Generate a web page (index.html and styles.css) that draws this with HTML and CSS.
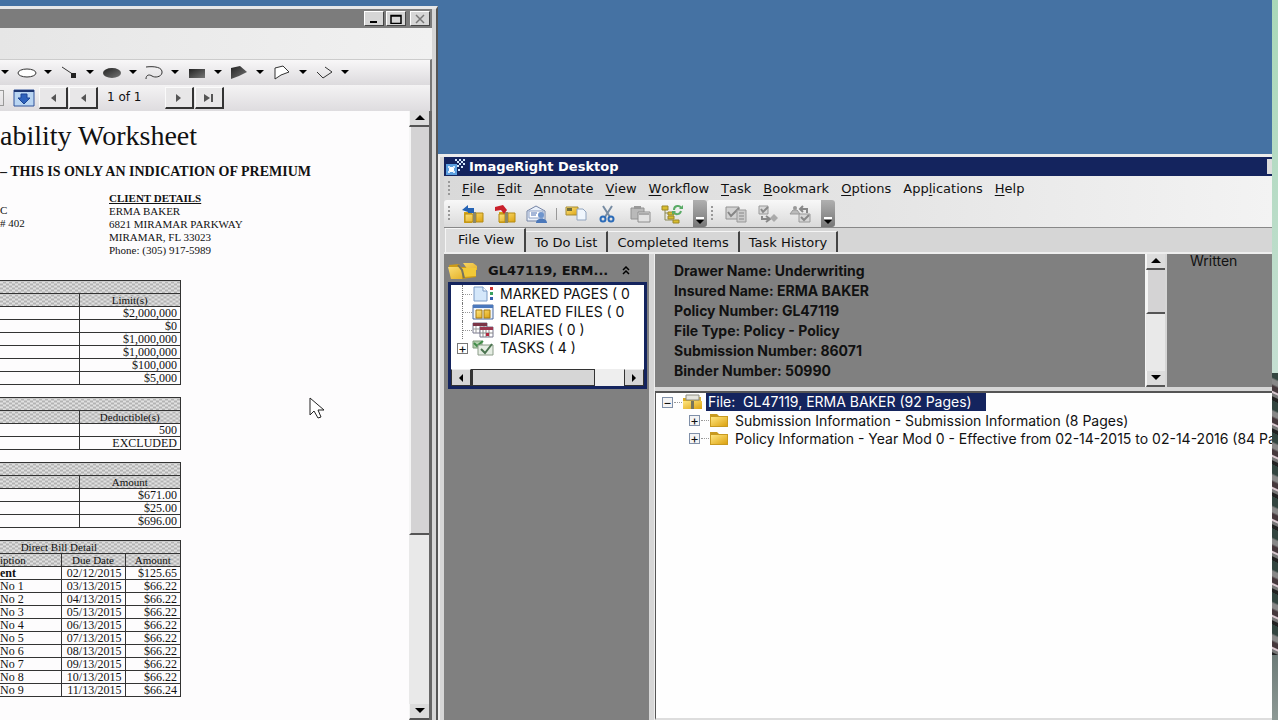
FILE: index.html
```html
<!DOCTYPE html>
<html lang="en">
<head>
  <meta charset="UTF-8">
  <title>ImageRight Desktop</title>
  <link rel="stylesheet" href="styles.css">
</head>
<body>

  <!-- shared icons -->
  <svg class="defs" width="0" height="0" aria-hidden="true">
    <defs>
      <linearGradient id="dark" x1="0" y1="0" x2="1" y2="1"><stop offset="0" stop-color="#222"/><stop offset="1" stop-color="#777"/></linearGradient>
      <linearGradient id="gold" x1="0" y1="0" x2="1" y2="1"><stop offset="0" stop-color="#ffe680"/><stop offset="1" stop-color="#dca210"/></linearGradient>
    </defs>
    <symbol id="folder" viewBox="0 0 20 16">
      <path d="M1 2h7l2 2h9v11H1z" fill="#c89a20"/>
      <path d="M2 5h16v9H2z" fill="url(#gold)"/>
    </symbol>
    <symbol id="down" viewBox="0 0 8 5"><path d="M0 0h8L4 4z" fill="#000"/></symbol>
    <symbol id="open-file" viewBox="0 0 22 18">
      <path d="M1 5h6l2 2h3v9H1z" fill="#d9a91c"/>
      <path d="M11 4h8v12h-8z" fill="#d6b33c"/>
      <path d="M4 2h13v5H4z" fill="#e4e4dc" stroke="#8b8b80"/>
      <path d="M1 8h8v8H1zM12 8h8v8h-8z" fill="url(#gold)"/>
      <path d="M9 8h3v8H9z" fill="#77755c"/>
    </symbol>
  </svg>

  <div class="window viewer">
    <div class="viewer-title">
      <button class="win-btn" aria-label="Minimize"><svg width="12" height="10"><path d="M2 8h7" stroke="#000" stroke-width="2"/></svg></button>
      <button class="win-btn" aria-label="Maximize"><svg width="12" height="10"><path d="M1 1.500h10v8H1zM1 2h10" fill="none" stroke="#000" stroke-width="1.500"/></svg></button>
      <button class="win-btn close" aria-label="Close"><svg width="12" height="10"><path d="M2 1l8 8M10 1l-8 8" stroke="#777" stroke-width="1.500"/></svg></button>
    </div>
    <div class="viewer-menu"></div>
    <div class="draw-bar">
      <button class="tool first" aria-label="More shapes"><svg width="8" height="5"><use href="#down"/></svg></button>
      <div class="tools">
        <button class="tool" aria-label="Ellipse"><svg width="20" height="16"><ellipse cx="10" cy="8" rx="9" ry="4" fill="#fff" stroke="#333"/></svg><svg width="8" height="5"><use href="#down"/></svg></button>
        <button class="tool" aria-label="Line"><svg width="20" height="16"><path d="M3 2l12 8" stroke="#333"/><path d="M12 8h5v5h-5z" fill="#222"/></svg><svg width="8" height="5"><use href="#down"/></svg></button>
        <button class="tool" aria-label="Filled ellipse"><svg width="20" height="16"><ellipse cx="10" cy="8" rx="9" ry="5" fill="url(#dark)"/></svg><svg width="8" height="5"><use href="#down"/></svg></button>
        <button class="tool" aria-label="Curve"><svg width="20" height="16"><path d="M2 2c8-1 17 0 16 6-1 4-7 5-10 3-3-2-6-1-6 3" fill="none" stroke="#333"/></svg><svg width="8" height="5"><use href="#down"/></svg></button>
        <button class="tool" aria-label="Filled box"><svg width="20" height="16"><path d="M2 4h16v9H2z" fill="url(#dark)"/></svg><svg width="8" height="5"><use href="#down"/></svg></button>
        <button class="tool" aria-label="Filled polygon"><svg width="20" height="16"><path d="M2 3l9-2 7 6-8 4-8 3z" fill="url(#dark)"/></svg><svg width="8" height="5"><use href="#down"/></svg></button>
        <button class="tool" aria-label="Polygon"><svg width="20" height="16"><path d="M3 3l8-2 6 6-8 3-6 4z" fill="#fff" stroke="#333"/></svg><svg width="8" height="5"><use href="#down"/></svg></button>
        <button class="tool" aria-label="Polyline"><svg width="20" height="16"><path d="M11 2l7 5-9 6-6-6" fill="none" stroke="#333"/></svg><svg width="8" height="5"><use href="#down"/></svg></button>
      </div>
    </div>
    <div class="page-bar">
      <span class="page-cut"></span>
      <button class="fit" aria-label="Fit page"><svg width="22" height="18"><path d="M1 1h20v16H1z" fill="#b9d5f2" stroke="#31529a"/><path d="M1 1h20v2H1z" fill="#1d3671"/><path d="M8 5h6v4h3l-6 6-6-6h3z" fill="#2e62bb" stroke="#1c4595"/></svg></button>
      <div class="page-nav">
        <button class="nav-btn" aria-label="First page"><svg width="8" height="10"><path d="M7 1v8L2 5z" fill="#555"/></svg></button>
        <button class="nav-btn" aria-label="Previous page"><svg width="8" height="10"><path d="M7 1v8L2 5z" fill="#555"/></svg></button>
      </div>
      <span class="page-no">1 of 1</span>
      <div class="page-nav">
        <button class="nav-btn" aria-label="Next page"><svg width="8" height="10"><path d="M1 1v8l5-4z" fill="#555"/></svg></button>
        <button class="nav-btn" aria-label="Last page"><svg width="12" height="10"><path d="M1 1v8l6-4zM8 1h2v8H8z" fill="#555"/></svg></button>
      </div>
    </div>

    <div class="viewer-body">
      <div class="document">
        <h1>ability Worksheet</h1>
        <p class="notice">– THIS IS ONLY AN INDICATION OF PREMIUM</p>
        <div class="parties">
          <address class="agent">C<br># 402</address>
          <div>
            <h2>CLIENT DETAILS</h2>
            <address>ERMA BAKER<br>6821 MIRAMAR PARKWAY<br>MIRAMAR, FL 33023<br>Phone: (305) 917-5989</address>
          </div>
        </div>

        <table class="sheet">
          <colgroup><col class="c-name"><col></colgroup>
          <tr><th colspan="2"></th></tr>
          <tr><th></th><th>Limit(s)</th></tr>
          <tr><td></td><td>$2,000,000</td></tr>
          <tr><td></td><td>$0</td></tr>
          <tr><td></td><td>$1,000,000</td></tr>
          <tr><td></td><td>$1,000,000</td></tr>
          <tr><td></td><td>$100,000</td></tr>
          <tr><td></td><td>$5,000</td></tr>
        </table>
        <table class="sheet">
          <colgroup><col class="c-name"><col></colgroup>
          <tr><th colspan="2"></th></tr>
          <tr><th></th><th>Deductible(s)</th></tr>
          <tr><td></td><td>500</td></tr>
          <tr><td></td><td>EXCLUDED</td></tr>
        </table>
        <table class="sheet">
          <colgroup><col class="c-name"><col></colgroup>
          <tr><th colspan="2"></th></tr>
          <tr><th></th><th>Amount</th></tr>
          <tr><td></td><td>$671.00</td></tr>
          <tr><td></td><td>$25.00</td></tr>
          <tr><td></td><td>$696.00</td></tr>
        </table>
        <table class="sheet bill">
          <colgroup><col class="c-desc"><col class="c-date"><col></colgroup>
          <tr><th colspan="3" class="bill-title">Direct Bill Detail</th></tr>
          <tr><th class="cut">iption</th><th>Due Date</th><th>Amount</th></tr>
          <tr><td class="cut"><b>ent</b></td><td>02/12/2015</td><td>$125.65</td></tr>
          <tr><td class="cut">No 1</td><td>03/13/2015</td><td>$66.22</td></tr>
          <tr><td class="cut">No 2</td><td>04/13/2015</td><td>$66.22</td></tr>
          <tr><td class="cut">No 3</td><td>05/13/2015</td><td>$66.22</td></tr>
          <tr><td class="cut">No 4</td><td>06/13/2015</td><td>$66.22</td></tr>
          <tr><td class="cut">No 5</td><td>07/13/2015</td><td>$66.22</td></tr>
          <tr><td class="cut">No 6</td><td>08/13/2015</td><td>$66.22</td></tr>
          <tr><td class="cut">No 7</td><td>09/13/2015</td><td>$66.22</td></tr>
          <tr><td class="cut">No 8</td><td>10/13/2015</td><td>$66.22</td></tr>
          <tr><td class="cut">No 9</td><td>11/13/2015</td><td>$66.24</td></tr>
        </table>
      </div>
      <div class="scroll-y viewer-scroll">
        <button class="scroll-btn" aria-label="Scroll up"><svg width="10" height="6"><path d="M0 5h10L5 0z"/></svg></button>
        <div class="thumb"></div>
        <button class="scroll-btn bottom" aria-label="Scroll down"><svg width="10" height="6"><path d="M0 0h10L5 5z"/></svg></button>
      </div>
    </div>
  </div>

  <div class="window desktop-app">
    <div class="app-title">
      <svg width="22" height="17"><path d="M1 6h11v11H1z" fill="#5b9fe0"/><path d="M4 9h5v5H4z" fill="#fff"/><path d="M3 8h2v2H3zM8 8h2v2H8zM3 13h2v2H3zM8 13h2v2H8zM10 1h2v2h-2zM14 1h2v2h-2zM18 1h2v2h-2zM12 3h2v2h-2zM16 3h2v2h-2zM14 5h2v2h-2zM18 5h2v2h-2zM12 7h2v2h-2zM16 8h2v2h-2zM13 11h2v2h-2z" fill="#d5e8fb"/></svg>
      <span>ImageRight Desktop</span>
      <button class="title-cut" aria-label="Minimize"></button>
    </div>
    <nav class="menu">
      <span class="grip"></span>
      <button><u>F</u>ile</button>
      <button><u>E</u>dit</button>
      <button><u>A</u>nnotate</button>
      <button><u>V</u>iew</button>
      <button><u>W</u>orkflow</button>
      <button><u>T</u>ask</button>
      <button><u>B</u>ookmark</button>
      <button><u>O</u>ptions</button>
      <button>App<u>l</u>ications</button>
      <button><u>H</u>elp</button>
    </nav>
    <div class="app-tools">
      <div class="strip main-strip">
        <span class="grip"></span>
        <button aria-label="Open file"><svg width="22" height="20"><path d="M2 8h8v11H2z" fill="#d6a516"/><path d="M3 10h8v8H3zM14 9h7v9h-7z" fill="url(#gold)" stroke="#b48a13"/><path d="M11 8h3v11h-3z" fill="#8b8868"/><path d="M0 6l6-5v3h6v5H6V8z" fill="#2563b4"/></svg></button>
        <button aria-label="Close file"><svg width="22" height="20"><path d="M5 8h7v11H5z" fill="#d6a516"/><path d="M5 10h6v8H5zM14 9h7v9h-7z" fill="url(#gold)" stroke="#b48a13"/><path d="M11 8h3v11h-3z" fill="#8b8868"/><path d="M1 3l8-2 4 5-3 4-3-4-6 1z" fill="#c9202b"/></svg></button>
        <button aria-label="Send"><svg width="22" height="20"><path d="M1 7l9-5 9 5v10H1z" fill="#e9f0fa" stroke="#7584a5"/><path d="M3 7h14v7H3z" fill="#fff" stroke="#8da0c4"/><path d="M5 9h6M5 11h5" stroke="#4a6fb1"/><circle cx="15" cy="11" r="3" fill="#6f95cd"/><path d="M10 19c0-6 11-6 11 0z" fill="#4b78ba"/></svg></button>
        <span class="rule"></span>
        <button aria-label="Copy page"><svg width="22" height="20"><path d="M1 3h12v8H1z" fill="url(#gold)" stroke="#a58b35"/><path d="M2 4h5v3H2z" fill="#706c3a"/><path d="M12 5h6l3 3v8h-9z" fill="#f0f6fd" stroke="#91a4be"/></svg></button>
        <button aria-label="Cut"><svg width="22" height="20"><path d="M6 2l7 11M15 2L8 13" stroke="#778ca3" stroke-width="2"/><circle cx="6" cy="15" r="2.500" fill="none" stroke="#2b6bb8" stroke-width="2"/><circle cx="14" cy="15" r="2.500" fill="none" stroke="#2b6bb8" stroke-width="2"/></svg></button>
        <button aria-label="Paste"><svg width="22" height="20"><path d="M2 4h13v11H2z" fill="#b9b9b9" stroke="#929292"/><path d="M5 2h7v3H5z" fill="#999"/><path d="M9 8h12v10H9z" fill="#e2e2e2" stroke="#8e8e8e"/><path d="M10 9h10v2H10z" fill="#aaa"/></svg></button>
        <button aria-label="Refresh tree"><svg width="22" height="20"><path d="M4 5v11h8M4 9h7" fill="none" stroke="#8b8a55"/><path d="M1 2h6v4H1zM7 8h6v3H7zM7 12h6v3H7zM12 16h6v3h-6z" fill="#d9bd2f" stroke="#9b8726"/><path d="M13 6c0-5 6-5 7-2M20 7c-1 4-6 4-7 1" fill="none" stroke="#5aab66" stroke-width="2"/><path d="M18 5h4V1zM15 7h-4v4z" fill="#5aab66"/></svg></button>
        <button class="more" aria-label="Toolbar options"><svg width="8" height="8"><path d="M0 1h8" stroke="#fff" stroke-width="2"/><path d="M0 3h8L4 7z"/></svg></button>
      </div>
      <div class="strip task-strip">
        <span class="grip"></span>
        <button aria-label="Task list"><svg width="22" height="20"><path d="M1 3h13v12H1z" fill="#d2d2d2" stroke="#929292"/><path d="M3 8l3 4 8-8" fill="none" stroke="#858585" stroke-width="2"/><path d="M12 6h9v12h-9z" fill="#ccc" stroke="#999"/><path d="M14 9h5M14 12h5M14 15h5" stroke="#888"/></svg></button>
        <button aria-label="Route task"><svg width="22" height="20"><path d="M2 2h9v8H2z" fill="#d8d8d8" stroke="#999"/><path d="M4 5l2 3 5-5M5 12v3h7M9 12l4 3-4 3" fill="none" stroke="#888" stroke-width="2"/><path d="M17 10l4 4-4 4-4-4z" fill="#aaa"/></svg></button>
        <button aria-label="Assign task"><svg width="22" height="20"><circle cx="6" cy="4" r="2" fill="#999"/><path d="M1 10l3-4h4l3 4z" fill="#bbb" stroke="#999"/><path d="M12 5h6v4M14 2l-3 3 3 3" fill="none" stroke="#888" stroke-width="2"/><path d="M10 10h11v8H10z" fill="#d6d6d6" stroke="#999"/><path d="M12 13l3 3 5-5" fill="none" stroke="#888" stroke-width="2"/></svg></button>
        <button class="more" aria-label="Toolbar options"><svg width="8" height="8"><path d="M0 1h8" stroke="#fff" stroke-width="2"/><path d="M0 3h8L4 7z"/></svg></button>
      </div>
    </div>
    <div class="tabs">
      <button class="tab active">File View</button>
      <button class="tab">To Do List</button>
      <button class="tab">Completed Items</button>
      <button class="tab">Task History</button>
    </div>

    <div class="app-body">
      <div class="side">
        <div class="side-head">
          <svg width="30" height="20"><path d="M1 5l10-1 2 3h15v10l-14 2H3z" fill="#cc9b18"/><path d="M0 7h11l3 4v8H3zM15 3h10l4 3v4h-9z" fill="url(#gold)"/><path d="M12 8l4 9 12-1V8z" fill="#f2c937"/><path d="M10 5l4 5 2 8" fill="none" stroke="#77745f" stroke-width="2"/></svg>
          <b>GL47119, ERM...</b>
          <button aria-label="Collapse"><svg width="8" height="9"><path d="M1 4l3-3 3 3M1 8l3-3 3 3" fill="none" stroke="#000" stroke-width="1.500"/></svg></button>
        </div>
        <div class="side-box">
          <ul class="side-tree">
            <li><span class="twig"></span><svg width="22" height="16"><path d="M2 1h9l4 4v10H2z" fill="#d4e7fa" stroke="#7999c4"/><path d="M11 1v4h4" fill="#fff" stroke="#7999c4"/><path d="M18 1h3v3h-3z" fill="#c33"/><path d="M18 6h3v3h-3z" fill="#39a05e"/><path d="M18 11h3v3h-3z" fill="#365fae"/></svg>MARKED PAGES ( 0</li>
            <li><span class="twig"></span><svg width="22" height="16"><path d="M1 1h20v14H1z" fill="#eef4fb" stroke="#49699f"/><path d="M1 1h20v3H1z" fill="#4a78bd"/><path d="M4 6h6v8H4zM12 6h6v8h-6z" fill="url(#gold)" stroke="#a67b12"/></svg>RELATED FILES ( 0</li>
            <li><span class="twig"></span><svg width="22" height="16"><path d="M1 1h14v10H1z" fill="#fff" stroke="#77778c"/><path d="M1 1h14v3H1z" fill="#7b3446"/><path d="M4 4v7M8 4v7M12 4v7M1 7h14" stroke="#999"/><path d="M8 5h13v10H8z" fill="#fff" stroke="#77778c"/><path d="M8 5h13v3H8z" fill="#9c3850"/><path d="M11 8v7M14 8v7M17 8v7M8 11h13" stroke="#888"/><path d="M14 11h3v3h-3z" fill="#b3263f"/></svg>DIARIES ( 0 )</li>
            <li><span class="twig plus">+</span><svg width="22" height="16"><path d="M1 1h9v7H1z" fill="#b4d0ae" stroke="#7d9a79"/><path d="M2 3l3 3 6-5" fill="none" stroke="#3f8c47" stroke-width="2"/><path d="M6 5h15v10H6z" fill="#e5ede3" stroke="#8b9c88"/><path d="M9 9l4 4 7-9" fill="none" stroke="#4b7450" stroke-width="2"/></svg>TASKS ( 4 )</li>
          </ul>
          <div class="scroll-x">
            <button aria-label="Scroll left"><svg width="6" height="8"><path d="M5 0v8L1 4z"/></svg></button>
            <div class="thumb-x"></div>
            <button class="right" aria-label="Scroll right"><svg width="6" height="8"><path d="M1 0v8l4-4z"/></svg></button>
          </div>
        </div>
      </div>

      <div class="main">
        <div class="info">
          <div class="info-list">
            <p>Drawer Name: Underwriting</p>
            <p>Insured Name: ERMA BAKER</p>
            <p>Policy Number: GL47119</p>
            <p>File Type: Policy - Policy</p>
            <p>Submission Number: 86071</p>
            <p>Binder Number: 50990</p>
          </div>
          <div class="scroll-y info-scroll">
            <button class="scroll-btn" aria-label="Scroll up"><svg width="10" height="6"><path d="M0 5h10L5 0z"/></svg></button>
            <div class="thumb"></div>
            <button class="scroll-btn bottom" aria-label="Scroll down"><svg width="10" height="6"><path d="M0 0h10L5 5z"/></svg></button>
          </div>
          <div class="written">Written</div>
        </div>
        <ul class="file-tree">
          <li class="root"><span class="box">−</span><svg width="22" height="18"><use href="#open-file"/></svg><span class="selected">File:&nbsp; GL47119, ERMA BAKER (92 Pages)</span></li>
          <li><span class="box">+</span><svg width="20" height="16"><use href="#folder"/></svg><span>Submission Information - Submission Information (8 Pages)</span></li>
          <li><span class="box">+</span><svg width="20" height="16"><use href="#folder"/></svg><span>Policy Information - Year Mod 0 - Effective from 02-14-2015 to 02-14-2016 (84 Pag</span></li>
        </ul>
      </div>
    </div>
  </div>

  <div class="wallpaper"></div>

  <svg class="pointer" width="16" height="22"><path d="M1 1v17l4-4 4 7 3-1-3-7h6z" fill="#fff" stroke="#222"/></svg>
</body>
</html>
```
FILE: styles.css
```css
:root {
  --face: #d6d6d6;
  --gray: #808080;
  --navy: #14245e;
  --ui-font: "DejaVu Sans", Verdana, sans-serif;
  --tree-font: Inter, "Liberation Sans", sans-serif;
  --doc-font: "Liberation Serif", "Times New Roman", serif;
}

* {
  box-sizing: border-box;
}

body {
  margin: 0;
  height: 100vh;
  overflow: hidden;
  position: relative;
  background: #4572a3;
  font-family: var(--ui-font);
  font-size: 12px;
  color: #111;
}

button {
  font: inherit;
  color: inherit;
  padding: 0;
  border: none;
  background: none;
  display: flex;
  align-items: center;
  justify-content: center;
}

ul, p, h1, h2 {
  margin: 0;
  padding: 0;
  list-style: none;
}

svg {
  flex: none;
}

.defs {
  position: absolute;
}

.window {
  position: absolute;
  display: flex;
  flex-direction: column;
  overflow: hidden;
}

/* document viewer */
.viewer {
  left: 0;
  top: 6px;
  bottom: 0;
  width: 438px;
  border-top: 3px solid #e8e8e8;
  border-right: 2px solid #555;
  background: var(--face);
  padding-right: 4px;
}

.viewer-title {
  display: flex;
  align-items: center;
  justify-content: flex-end;
  gap: 2px;
  height: 19px;
  flex: none;
  padding-right: 2px;
  background: #7c7c7c;
}

.win-btn {
  width: 20px;
  height: 15px;
  background: var(--face);
  border: 1px solid;
  border-color: #fff #444 #444 #fff;
}

.win-btn.close {
  margin-left: 2px;
}

.viewer-menu {
  height: 31px;
  flex: none;
  background: linear-gradient(to right, #e6e6e6, #f1f1f1);
}

.draw-bar {
  display: flex;
  align-items: center;
  height: 26px;
  flex: none;
  border-top: 1px solid #ccc;
  border-right: 2px solid #777;
  background: linear-gradient(#f8f7f8, #dcdadd);
}

.tools {
  display: flex;
  flex: 0 1 340px;
  margin-left: 3px;
}

.tool {
  flex: 1;
  gap: 7px;
}

.tool.first {
  flex: 0 0 10px;
}

.page-bar {
  display: flex;
  align-items: center;
  height: 26px;
  flex: none;
  border-right: 2px solid #777;
  background: linear-gradient(#f4f3f4, #dedcdf);
}

.page-cut {
  width: 4px;
  height: 16px;
  border: 1px solid #999;
  border-left: none;
}

.fit {
  margin: 0 4px 0 9px;
}

.page-nav {
  display: flex;
  gap: 1px;
}

.nav-btn {
  width: 29px;
  height: 22px;
  background: #e8e7e8;
  border: 1px solid;
  border-width: 1px 2px 2px 1px;
  border-color: #fafafa #333 #333 #fafafa;
}

.page-no {
  width: 67px;
  padding-left: 9px;
  padding-bottom: 3px;
}

.viewer-body {
  display: flex;
  flex: 1;
  min-height: 0;
}

.document {
  flex: 1;
  overflow: hidden;
  background: #fdfcfd;
  font-family: var(--doc-font);
  font-size: 11px;
  line-height: 13px;
}

.document h1 {
  margin-top: 9px;
  font-size: 28px;
  line-height: 32px;
  font-weight: normal;
}

.notice {
  margin-top: 12px;
  font-size: 14px;
  line-height: 16px;
  font-weight: bold;
  white-space: nowrap;
}

.parties {
  display: flex;
  margin: 12px 0 23px;
}

.agent {
  width: 109px;
  padding-top: 12px;
}

.document address {
  font-style: normal;
}

.document h2 {
  font-size: 11px;
  line-height: 13px;
  text-decoration: underline;
}

.sheet {
  width: 181px;
  margin-bottom: 12px;
  border-collapse: collapse;
  table-layout: fixed;
  font-size: 12px;
  line-height: 12px;
}

.sheet th,
.sheet td {
  height: 13px;
  padding: 0 3px;
  border: 1px solid #333;
  white-space: nowrap;
  overflow: hidden;
}

.sheet th:first-child,
.sheet td:first-child {
  border-left: none;
}

/* dithered header cells */
.sheet th {
  font-size: 11px;
  font-weight: normal;
  background:
    repeating-conic-gradient(rgba(90, 90, 90, 0.25) 0 25%, transparent 0 50%) 0 0 / 4px 2px,
    repeating-conic-gradient(#c0c0c0 0 25%, #f4f4f4 0 50%) 0 0 / 6px 4px;
}

.sheet td {
  text-align: right;
}

.sheet .cut {
  padding-left: 0;
  text-align: left;
}

.sheet .bill-title {
  padding-right: 83px;
  text-align: right;
}

.c-name {
  width: 79px;
}

.c-desc {
  width: 61px;
}

.c-date {
  width: 64px;
}

/* scrollbars */
.scroll-y {
  display: flex;
  flex-direction: column;
  flex: none;
  width: 20px;
  background: #e9e9e9;
}

.scroll-btn {
  width: 100%;
  height: 16px;
  flex: none;
  background: #dcdcdc;
  border-bottom: 2px solid #555;
  border-left: 1px solid #f5f5f5;
}

.scroll-btn.bottom {
  margin-top: auto;
}

.thumb {
  background: #d4d3d4;
  border-left: 2px solid #f5f5f5;
  border-bottom: 2px solid #555;
}

.viewer-scroll {
  width: 23px;
  border-right: 3px solid #666;
}

.viewer-scroll .thumb {
  height: 67%;
}

.info-scroll {
  border-left: 1px solid #f5f5f5;
}

.info-scroll .thumb {
  height: 44px;
}

/* ImageRight */
.desktop-app {
  left: 438px;
  right: 6px;
  top: 154px;
  bottom: 0;
  border-top: 3px solid #ececec;
  border-left: 2px solid #eee;
  padding-left: 4px;
  background: var(--face);
  font-size: 13px;
}

.app-title {
  display: flex;
  align-items: center;
  gap: 2px;
  height: 19px;
  flex: none;
  padding-left: 1px;
  background: var(--navy);
  color: #fff;
  font-weight: bold;
}

.title-cut {
  width: 5px;
  height: 15px;
  margin-left: auto;
  background: #ddd;
}

.menu {
  display: flex;
  align-items: center;
  gap: 12px;
  height: 24px;
  flex: none;
  padding-left: 4px;
  background: linear-gradient(to right, #d9d9d9, #e4e4e4 50%, #f3f3f3);
}

.menu u {
  text-underline-offset: 2px;
}

.grip {
  width: 2px;
  height: 15px;
  background: repeating-linear-gradient(#999 0 2px, transparent 2px 4px);
}

.app-tools {
  display: flex;
  height: 28px;
  flex: none;
  border-bottom: 1px solid #888;
  background: linear-gradient(to right, #d9d9d9, #e4e4e4 50%, #f3f3f3);
}

.strip {
  display: flex;
  align-items: center;
  gap: 10px;
  padding-left: 4px;
  background: linear-gradient(#f8f8f8, #dadada);
  border-radius: 3px;
}

.strip .grip {
  margin-right: 2px;
}

.rule {
  width: 1px;
  height: 12px;
  margin: 0 -2px;
  background: #999;
}

.more {
  width: 14px;
  height: 100%;
  align-items: flex-end;
  padding-bottom: 2px;
  border-radius: 0 3px 3px 0;
  background: linear-gradient(#b0b0b0, #777);
}

.tabs {
  display: flex;
  align-items: flex-end;
  height: 26px;
  flex: none;
  padding-left: 1px;
  border-bottom: 2px solid #eee;
}

.tab {
  height: 21px;
  padding: 0 9px;
  border-top: 1px solid #f5f5f5;
  border-right: 2px solid #444;
}

.tab.active {
  height: 24px;
  padding: 0 9px 3px 12px;
  background: #dedede;
  border-left: 1px solid #f5f5f5;
}

.app-body {
  display: flex;
  flex: 1;
  min-height: 0;
}

.side {
  width: 205px;
  flex: none;
  padding: 4px 2px 0 4px;
  background: var(--gray);
}

.side-head {
  display: flex;
  align-items: center;
  height: 24px;
  gap: 10px;
}

.side-head b {
  white-space: nowrap;
}

.side-head button {
  margin-left: 4px;
}

.side-box {
  border: 3px solid var(--navy);
  background: #fff;
}

.side-tree {
  padding: 0 0 12px 6px;
  overflow: hidden;
  font-family: var(--tree-font);
  font-size: 14px;
  line-height: 18px;
}

.side-tree li {
  display: flex;
  align-items: center;
  height: 18px;
  white-space: nowrap;
}

.side-tree li svg {
  margin-right: 6px;
}

.twig {
  align-self: stretch;
  width: 10px;
  margin-left: 5px;
  border-left: 1px dotted #777;
  background: linear-gradient(to right, #999 1px, transparent 1px) 0 50% / 2px 1px repeat-x;
}

.twig.plus {
  align-self: center;
  width: 11px;
  height: 11px;
  margin: 0 4px 0 0;
  border: 1px solid #777;
  background: #fff;
  font-size: 13px;
  line-height: 9px;
  text-align: center;
}

.scroll-x {
  display: flex;
  height: 17px;
  background: #eee;
}

.scroll-x button {
  width: 20px;
  background: var(--face);
  border: 1px solid #333;
  border-top-color: #eee;
}

.scroll-x .right {
  margin-left: auto;
}

.thumb-x {
  width: 124px;
  background: var(--face);
  border: 1px solid #333;
  border-left-width: 2px;
}

.main {
  display: flex;
  flex-direction: column;
  flex: 1;
  min-width: 0;
  margin-left: 5px;
  border-left: 1px solid #eee;
}

.info {
  display: flex;
  flex: none;
  height: 133px;
  background: var(--gray);
  font-family: var(--tree-font);
  font-size: 14px;
}

.info-list {
  flex: 1;
  padding: 7px 0 0 19px;
  line-height: 20px;
  font-weight: bold;
}

.written {
  width: 107px;
  padding: 0 0 0 23px;
  line-height: 14px;
  border-left: 2px solid var(--face);
}

.file-tree {
  flex: 1;
  margin-top: 4px;
  padding-left: 6px;
  border-top: 2px solid #555;
  border-left: 1px solid #555;
  border-bottom: 2px solid #ddd;
  background: #fefefe;
  overflow: hidden;
  font-family: var(--tree-font);
  font-size: 14px;
}

.file-tree li {
  display: flex;
  align-items: center;
  height: 18px;
  padding-left: 27px;
  white-space: nowrap;
}

.file-tree li.root {
  padding-left: 0;
}

.file-tree li svg {
  margin-right: 6px;
}

.file-tree li.root svg {
  margin-right: 2px;
}

.box {
  display: flex;
  align-items: center;
  justify-content: center;
  width: 11px;
  height: 11px;
  flex: none;
  position: relative;
  border: 1px solid #7f8fa8;
  background: #f4f4f4;
  font-size: 13px;
  line-height: 9px;
}

/* dotted branch between the expand box and the folder */
.box::after {
  content: "";
  position: absolute;
  left: 11px;
  top: 4px;
  width: 8px;
  border-top: 1px dotted #999;
}

.box + svg {
  margin-left: 9px;
}

.selected {
  padding: 0 14px 0 2px;
  line-height: 18px;
  background: var(--navy);
  color: #fff;
}

/* strip of desktop picture on the right edge */
.wallpaper {
  position: absolute;
  top: 0;
  right: 0;
  bottom: 0;
  width: 6px;
  background:
    linear-gradient(#a9d8b9, #c5dfd2) 0 0 / 100% 373px no-repeat,
    linear-gradient(#6d7b78, #8d9995) 0 100% / 100% 65px no-repeat,
    repeating-linear-gradient(25deg, #222 0 3px, #777 4px 6px, #d8c8cf 7px 8px, #45383c 9px 13px, #888 15px 19px, #334540 21px 29px);
}

.pointer {
  position: absolute;
  left: 309px;
  top: 397px;
}
```
